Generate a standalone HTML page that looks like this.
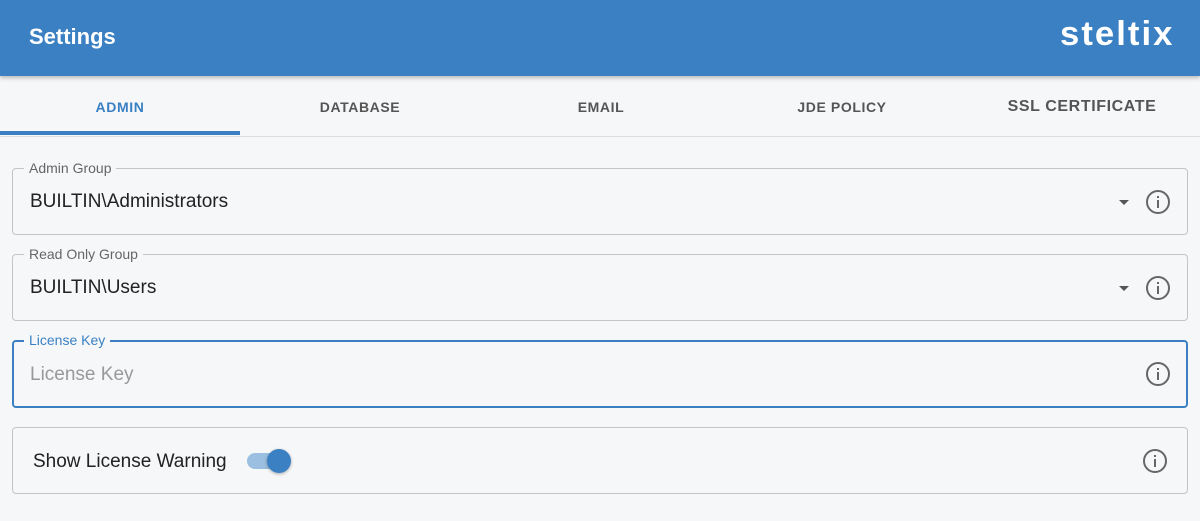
<!DOCTYPE html>
<html><head><style>
body{margin:0;width:1200px;height:521px;background:#f6f7f9;font-family:"Liberation Sans",sans-serif;position:relative;overflow:hidden}
.hdr{position:absolute;left:0;top:0;width:1200px;height:76px;background:#3a80c3;box-shadow:0 2px 4px rgba(0,0,0,.25)}
.hdr .t{position:absolute;left:29px;top:24px;color:#fff;font-size:22px;font-weight:bold}
.logo{position:absolute;left:1060px;top:15px;color:#fff;font-size:34px;font-weight:bold;letter-spacing:2px;transform:scaleX(1.02);transform-origin:left}
.tabs{position:absolute;top:76px;left:0;width:1200px;height:60px;border-bottom:1px solid #ddd}
.tab{position:absolute;top:23px;font-size:14px;font-weight:bold;color:#555;letter-spacing:.6px;text-align:center;width:240px}
.ind{position:absolute;left:0;top:131px;width:240px;height:4px;background:#3a80c3}
.f{position:absolute;left:12px;width:1176px;border:1px solid #c4c4c4;border-radius:4px;box-sizing:border-box}
.lbl{position:absolute;left:11px;top:-9px;background:#f6f7f9;padding:0 5px;font-size:14px;color:#666}
.v{position:absolute;left:17px;top:22px;font-size:19px;color:#222}
.info{position:absolute;width:24px;height:24px;border:2px solid #666;border-radius:50%;box-sizing:border-box}
.info:before{content:"";position:absolute;left:9px;top:4px;width:2px;height:2px;background:#666}
.info:after{content:"";position:absolute;left:9px;top:8px;width:2px;height:8px;background:#666}
.arr{position:absolute;width:0;height:0;border-left:5px solid transparent;border-right:5px solid transparent;border-top:5px solid #555}
</style></head><body>
<div class="hdr"><div class="t">Settings</div><div class="logo">steltix</div></div>
<div class="tabs">
<div class="tab" style="left:0;color:#3a80c3">ADMIN</div>
<div class="tab" style="left:240px">DATABASE</div>
<div class="tab" style="left:481px">EMAIL</div>
<div class="tab" style="left:722px">JDE POLICY</div>
<div class="tab" style="left:962px;font-size:16px;top:22px">SSL CERTIFICATE</div>
</div>
<div class="ind"></div>
<div class="f" style="top:168px;height:67px"><div class="lbl">Admin Group</div><div class="v">BUILTIN\Administrators</div><div class="arr" style="left:1106px;top:31px"></div><div class="info" style="left:1133px;top:21px"></div></div>
<div class="f" style="top:254px;height:67px"><div class="lbl">Read Only Group</div><div class="v">BUILTIN\Users</div><div class="arr" style="left:1106px;top:31px"></div><div class="info" style="left:1133px;top:21px"></div></div>
<div class="f" style="top:340px;height:68px;border:2px solid #3a80c3"><div class="lbl" style="color:#3a80c3;left:10px;top:-10px">License Key</div><div class="v" style="color:#999;left:16px;top:22px">License Key</div><div class="info" style="left:1132px;top:20px"></div></div>
<div class="f" style="top:427px;height:67px"><div class="v" style="top:23px;left:20px">Show License Warning</div>
<div style="position:absolute;left:234px;top:25px;width:42px;height:16px;border-radius:8px;background:#9bbfe0"></div>
<div style="position:absolute;left:254px;top:21px;width:24px;height:24px;border-radius:50%;background:#3a80c3;box-shadow:0 1px 3px rgba(0,0,0,.3)"></div>
<div class="info" style="left:1130px;top:21px"></div></div>
</body></html>
